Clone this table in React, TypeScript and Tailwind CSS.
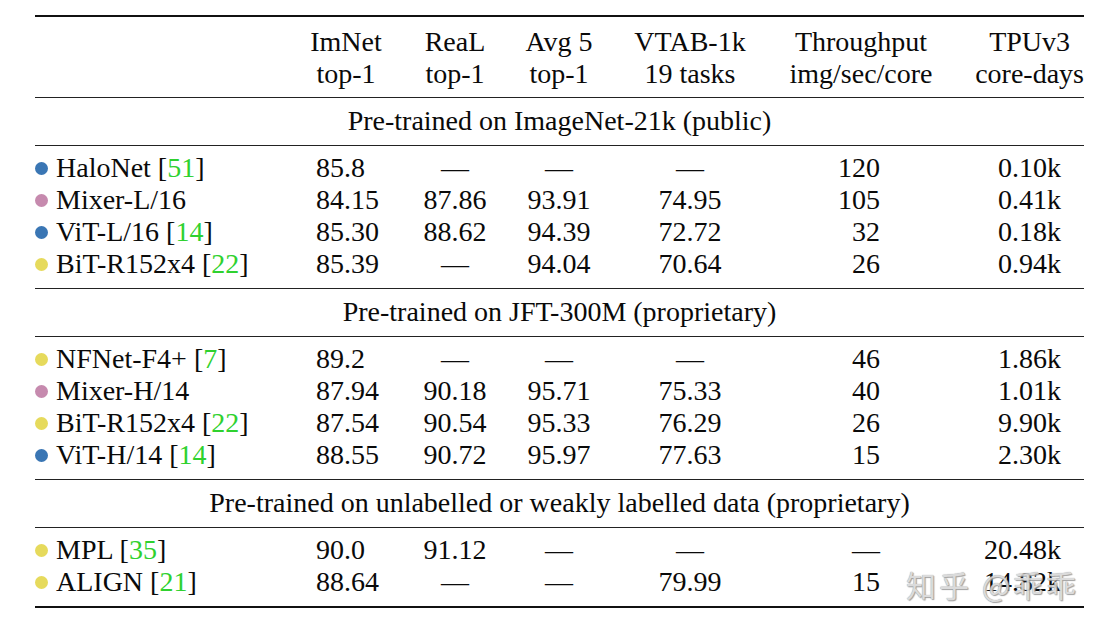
const blue = 'bg-[#3a76b4]';
const pink = 'bg-[#c68aae]';
const yellow = 'bg-[#e6da5c]';

type Row = {
  dot: string;
  name: string;
  cite?: string;
  vals: string[];
};

const sections: { title: string; rows: Row[] }[] = [
  {
    title: 'Pre-trained on ImageNet-21k (public)',
    rows: [
      { dot: blue, name: 'HaloNet', cite: '51', vals: ['85.8', '—', '—', '—', '120', '0.10k'] },
      { dot: pink, name: 'Mixer-L/16', vals: ['84.15', '87.86', '93.91', '74.95', '105', '0.41k'] },
      { dot: blue, name: 'ViT-L/16', cite: '14', vals: ['85.30', '88.62', '94.39', '72.72', '32', '0.18k'] },
      { dot: yellow, name: 'BiT-R152x4', cite: '22', vals: ['85.39', '—', '94.04', '70.64', '26', '0.94k'] },
    ],
  },
  {
    title: 'Pre-trained on JFT-300M (proprietary)',
    rows: [
      { dot: yellow, name: 'NFNet-F4+', cite: '7', vals: ['89.2', '—', '—', '—', '46', '1.86k'] },
      { dot: pink, name: 'Mixer-H/14', vals: ['87.94', '90.18', '95.71', '75.33', '40', '1.01k'] },
      { dot: yellow, name: 'BiT-R152x4', cite: '22', vals: ['87.54', '90.54', '95.33', '76.29', '26', '9.90k'] },
      { dot: blue, name: 'ViT-H/14', cite: '14', vals: ['88.55', '90.72', '95.97', '77.63', '15', '2.30k'] },
    ],
  },
  {
    title: 'Pre-trained on unlabelled or weakly labelled data (proprietary)',
    rows: [
      { dot: yellow, name: 'MPL', cite: '35', vals: ['90.0', '91.12', '—', '—', '—', '20.48k'] },
      { dot: yellow, name: 'ALIGN', cite: '21', vals: ['88.64', '—', '—', '79.99', '15', '14.82k'] },
    ],
  },
];

const cols = 'grid grid-cols-[265px_92px_126px_82px_180px_162px_142px]';

const cellClass = [
  'pl-[16px] text-left',
  'text-center',
  'text-center',
  'text-center',
  'pr-[62px] text-right',
  'pr-[23px] text-right',
];

function DataRow({ row }: { row: Row }) {
  return (
    <div className={`${cols} h-[32px] leading-[32px]`}>
      <div className="flex items-center">
        <span className={`w-[13px] h-[13px] rounded-full ${row.dot} mr-[8px]`} />
        <span>
          {row.name}
          {row.cite && (
            <>
              {' '}[<span className="text-[#2fd12f]">{row.cite}</span>]
            </>
          )}
        </span>
      </div>
      {row.vals.map((v, i) => (
        <div key={i} className={cellClass[i]}>
          {v}
        </div>
      ))}
    </div>
  );
}

export default function App() {
  return (
    <div
      className="relative w-[1111px] h-[633px] bg-white text-[#0a0a0a] text-[28px] overflow-hidden"
      style={{ fontFamily: '"Liberation Serif", "Times New Roman", serif' }}
    >
      <div className="ml-[35px] mt-[15px] w-[1049px]">
        {/* top rule */}
        <div className="h-[2px] bg-[#111]" />

        {/* header */}
        <div className={`${cols} pt-[9px] pb-[7px] leading-[32px]`}>
          <div />
          <div className="text-center">ImNet<br />top-1</div>
          <div className="text-center">ReaL<br />top-1</div>
          <div className="text-center">Avg 5<br />top-1</div>
          <div className="text-center">VTAB-1k<br />19 tasks</div>
          <div className="text-center">Throughput<br />img/sec/core</div>
          <div className="flex justify-end">
            <div className="text-center">TPUv3<br />core-days</div>
          </div>
        </div>
        <div className="h-[1px] bg-[#222]" />

        {sections.map((s, si) => (
          <div key={si}>
            <div className="pt-[7px] pb-[8px] text-center leading-[32px]">{s.title}</div>
            <div className="h-[1px] bg-[#222]" />
            <div className="pt-[6px] pb-[8px]">
              {s.rows.map((r, ri) => (
                <DataRow key={ri} row={r} />
              ))}
            </div>
            {si < sections.length - 1 ? (
              <div className="h-[1px] bg-[#222]" />
            ) : (
              <div className="h-[2px] bg-[#111]" />
            )}
          </div>
        ))}
      </div>

      {/* watermark */}
      <div
        className="absolute left-[906px] top-[566px] text-[30px] leading-[36px] text-[#d8d8d8] opacity-90 tracking-[3px]"
        style={{
          fontFamily: '"Noto Sans CJK SC", "Noto Sans", sans-serif',
          textShadow: '0 0 1px #8a8a8a, 1px 1px 1px #9a9a9a',
        }}
      >
        知乎 @乖乖
      </div>
    </div>
  );
}
